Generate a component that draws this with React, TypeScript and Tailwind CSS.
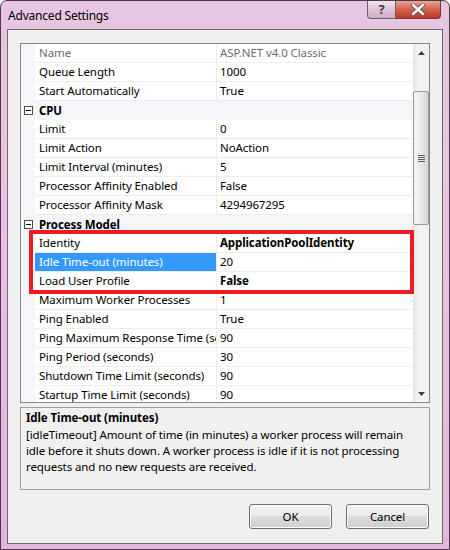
import React from "react";

type Row =
  | { kind: "cat"; label: string }
  | { kind: "prop"; name: string; value: string; bold?: boolean; gray?: boolean; selected?: boolean };

const rows: Row[] = [
  { kind: "prop", name: "Name", value: "ASP.NET v4.0 Classic", gray: true },
  { kind: "prop", name: "Queue Length", value: "1000" },
  { kind: "prop", name: "Start Automatically", value: "True" },
  { kind: "cat", label: "CPU" },
  { kind: "prop", name: "Limit", value: "0" },
  { kind: "prop", name: "Limit Action", value: "NoAction" },
  { kind: "prop", name: "Limit Interval (minutes)", value: "5" },
  { kind: "prop", name: "Processor Affinity Enabled", value: "False" },
  { kind: "prop", name: "Processor Affinity Mask", value: "4294967295" },
  { kind: "cat", label: "Process Model" },
  { kind: "prop", name: "Identity", value: "ApplicationPoolIdentity", bold: true },
  { kind: "prop", name: "Idle Time-out (minutes)", value: "20", selected: true },
  { kind: "prop", name: "Load User Profile", value: "False", bold: true },
  { kind: "prop", name: "Maximum Worker Processes", value: "1" },
  { kind: "prop", name: "Ping Enabled", value: "True" },
  { kind: "prop", name: "Ping Maximum Response Time (seconds)", value: "90" },
  { kind: "prop", name: "Ping Period (seconds)", value: "30" },
  { kind: "prop", name: "Shutdown Time Limit (seconds)", value: "90" },
  { kind: "prop", name: "Startup Time Limit (seconds)", value: "90" },
];

const font = { fontFamily: '"Segoe UI", "Noto Sans", "Open Sans", sans-serif' };

function MinusBox() {
  return (
    <svg width="9" height="9" viewBox="0 0 9 9" className="block">
      <rect x="0.5" y="0.5" width="8" height="8" fill="#fff" stroke="#4d4d4d" />
      <line x1="2" y1="4.5" x2="7" y2="4.5" stroke="#000" />
    </svg>
  );
}

function GridRow({ row }: { row: Row }) {
  if (row.kind === "cat") {
    return (
      <div className="flex h-[19px] shrink-0 items-center bg-[#f4f6fa]">
        <div className="flex w-[14px] justify-center pl-[1px]">
          <MinusBox />
        </div>
        <span className="pl-[4px] font-bold text-black">{row.label}</span>
      </div>
    );
  }
  return (
    <div className="flex h-[19px] shrink-0">
      <div className="w-[14px] shrink-0 bg-[#f4f6fa]" />
      <div
        className={
          "flex w-[182px] shrink-0 items-center overflow-hidden whitespace-nowrap border-r border-b border-[#ededed] pl-[4px] " +
          (row.selected ? "bg-[#3399ff] text-white" : row.gray ? "text-[#6d6d6d]" : "text-black")
        }
      >
        {row.name}
      </div>
      <div
        className={
          "flex flex-1 items-center overflow-hidden whitespace-nowrap border-b border-[#ededed] pl-[3px] " +
          (row.gray ? "text-[#6d6d6d] " : "text-black ") +
          (row.bold ? "font-bold" : "")
        }
      >
        {row.value}
      </div>
    </div>
  );
}

function ScrollBar() {
  return (
    <div className="flex w-[16px] shrink-0 flex-col bg-[linear-gradient(to_right,#e6e6e6,#f4f4f4_40%,#f0f0f0)]">
      <div className="flex h-[17px] items-center justify-center">
        <svg width="7" height="4" viewBox="0 0 7 4">
          <polygon points="3.5,0 7,4 0,4" fill="#404040" />
        </svg>
      </div>
      <div className="mt-[30px] flex h-[134px] items-center justify-center rounded-[2px] border border-[#9a9a9a] bg-[linear-gradient(to_right,#f3f3f3,#e9e9e9_50%,#d6d6d6)]">
        <div className="flex flex-col gap-[1px]">
          <div className="h-[1px] w-[7px] bg-[#5c5c5c]" />
          <div className="h-[1px] w-[7px] bg-[#5c5c5c]" />
          <div className="h-[1px] w-[7px] bg-[#5c5c5c]" />
          <div className="h-[1px] w-[7px] bg-[#5c5c5c]" />
        </div>
      </div>
      <div className="flex-1" />
      <div className="flex h-[17px] items-center justify-center">
        <svg width="7" height="4" viewBox="0 0 7 4">
          <polygon points="0,0 7,0 3.5,4" fill="#404040" />
        </svg>
      </div>
    </div>
  );
}

function DialogButton({ label }: { label: string }) {
  return (
    <button
      type="button"
      className="h-[25px] w-[83px] rounded-[3px] border border-[#707070] bg-[linear-gradient(to_bottom,#f2f2f2_0%,#ebebeb_50%,#dddddd_50%,#cfcfcf_100%)] text-[11.5px] text-black shadow-[inset_0_0_0_1px_#fcfcfc]"
    >
      {label}
    </button>
  );
}

export default function App() {
  return (
    <div
      className="relative flex h-[550px] w-[450px] flex-col overflow-hidden rounded-t-[7px] border border-[#4a3a4a] bg-[linear-gradient(to_bottom,#e6c6e0,#ecc4e4_30%,#e2b6da)] text-[11.5px] tracking-[-0.1px]"
      style={font}
    >
      {/* title bar */}
      <div className="flex h-[28px] shrink-0 items-start justify-between pr-[8px]">
        <span className="pl-[7px] pt-[6px] text-[12px] tracking-[-0.2px] text-black">Advanced Settings</span>
        <div className="flex">
          <div className="flex h-[18px] w-[29px] items-center justify-center rounded-bl-[4px] border border-t-0 border-[#6e5b6a] bg-[linear-gradient(to_bottom,#f2e3ee,#dcc3d6_50%,#cdb0c6)] text-[13px] font-bold text-[#3a3a4a]">
            ?
          </div>
          <div className="flex h-[18px] w-[45px] items-center justify-center rounded-br-[4px] border border-l-0 border-t-0 border-[#6e3a34] bg-[linear-gradient(to_bottom,#e8a493,#d4614c_50%,#c0392b)]">
            <svg width="14" height="11" viewBox="0 0 14 11">
              <path d="M2 1 L12 10 M12 1 L2 10" stroke="#4a4a58" strokeWidth="4" strokeLinecap="round" />
              <path d="M2 1 L12 10 M12 1 L2 10" stroke="#ffffff" strokeWidth="2.4" strokeLinecap="round" />
            </svg>
          </div>
        </div>
      </div>

      {/* client area */}
      <div className="mx-[6px] mb-[5px] flex flex-1 flex-col border border-[#6b6b6b] bg-[#f0f0f0] px-[12px] pt-[13px]">
        {/* property grid */}
        <div className="relative flex h-[360px] shrink-0 border border-[#828790] bg-white">
          <div className="flex flex-1 flex-col overflow-hidden">
            {rows.map((r, i) => (
              <GridRow key={i} row={r} />
            ))}
          </div>
          <ScrollBar />
          <div className="pointer-events-none absolute left-[8px] top-[186px] h-[64px] w-[385px] border-[4px] border-[#ed1c24]" />
        </div>

        {/* description */}
        <div className="mt-[4px] h-[83px] shrink-0 border border-[#a0a0a0] bg-[#f0f0f0] pl-[5px] pt-[2px] leading-[16px] text-black">
          <div className="font-bold">Idle Time-out (minutes)</div>
          <div className="mt-[1px] whitespace-nowrap">
            [idleTimeout] Amount of time (in minutes) a worker process will remain
          </div>
          <div className="whitespace-nowrap">
            idle before it shuts down. A worker process is idle if it is not processing
          </div>
          <div className="whitespace-nowrap">requests and no new requests are received.</div>
        </div>

        {/* buttons */}
        <div className="mt-[14px] flex justify-end gap-[14px] pr-[1px]">
          <DialogButton label="OK" />
          <DialogButton label="Cancel" />
        </div>
      </div>
    </div>
  );
}
